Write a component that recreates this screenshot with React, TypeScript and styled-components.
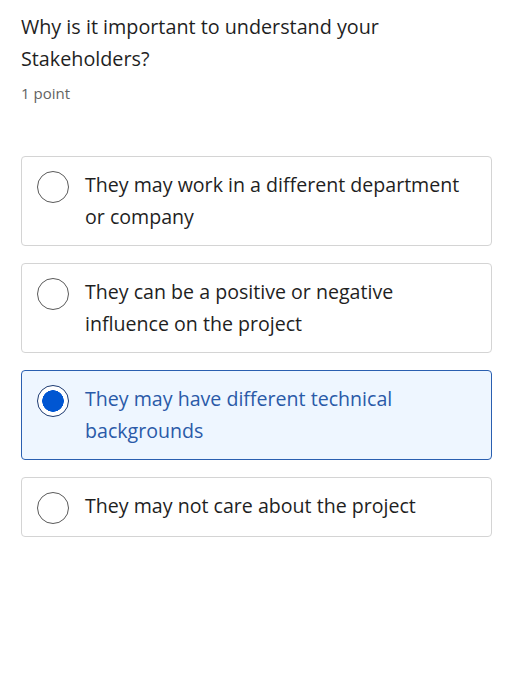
import { useState } from "react";
import styled, { createGlobalStyle } from "styled-components";

const GlobalStyle = createGlobalStyle`
    body {
        margin: 0;
        background: #ffffff;
        font-family: "Open Sans", "Noto Sans", sans-serif;
    }
`;

const options = [
    "They may work in a different department or company",
    "They can be a positive or negative influence on the project",
    "They may have different technical backgrounds",
    "They may not care about the project",
];

const App = () => {
    const [selected, setSelected] = useState(2);

    return (
        <>
            <GlobalStyle />
            <Page>
                <Question>Why is it important to understand your Stakeholders?</Question>
                <Points>1 point</Points>
                <OptionList>
                    {options.map((text, i) => (
                        <Option
                            key={text}
                            $selected={i === selected}
                            onClick={() => setSelected(i)}
                        >
                            <Radio $selected={i === selected} />
                            <OptionText $selected={i === selected}>{text}</OptionText>
                        </Option>
                    ))}
                </OptionList>
            </Page>
        </>
    );
};

export default App;

const Page = styled.div`
    padding: 11px 17px 0 21px;
    width: 471px;
`;

const Question = styled.h2`
    margin: 0;
    font-size: 19.75px;
    font-weight: 400;
    line-height: 32px;
    color: #1f1f1f;
    padding-right: 100px;
`;

const Points = styled.div`
    margin-top: 8px;
    font-size: 15px;
    line-height: 20px;
    color: #636363;
`;

const OptionList = styled.div`
    margin-top: 53px;
    display: flex;
    flex-direction: column;
    gap: 17px;
`;

const Option = styled.div<{ $selected: boolean }>`
    display: flex;
    align-items: flex-start;
    gap: 16px;
    padding: 12px 12px 12px 15px;
    border: 1px solid ${({ $selected }) => ($selected ? "#2a5fb0" : "#d4d4d4")};
    border-radius: 4px;
    background: ${({ $selected }) => ($selected ? "#eef6ff" : "#ffffff")};
    cursor: pointer;
`;

const Radio = styled.span<{ $selected: boolean }>`
    flex: none;
    box-sizing: border-box;
    margin-top: 2px;
    width: 32px;
    height: 32px;
    border-radius: 50%;
    border: 1.5px solid ${({ $selected }) => ($selected ? "#1d3b72" : "#5a5a5a")};
    background: ${({ $selected }) =>
        $selected
            ? "radial-gradient(circle, #0056d2 0 10.5px, #ffffff 11px)"
            : "#ffffff"};
`;

const OptionText = styled.span<{ $selected: boolean }>`
    font-size: 19.6px;
    line-height: 32px;
    color: ${({ $selected }) => ($selected ? "#2a5aa8" : "#1f1f1f")};
`;
